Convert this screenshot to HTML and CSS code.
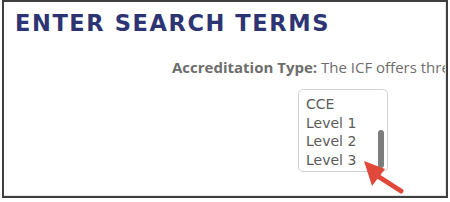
FILE: index.html
```html
<!DOCTYPE html>
<html>
<head>
<meta charset="utf-8">
<link rel="stylesheet" href="styles.css">
</head>
<body>
<div class="frame">
  <div class="inner">
    <h1 class="title">ENTER SEARCH TERMS</h1>
    <div class="field">
      <p class="label"><b>Accreditation Type:</b> The ICF offers three levels of credentials</p>
      <div class="listbox">
        <div class="options">
          <div class="opt">CCE</div>
          <div class="opt">Level 1</div>
          <div class="opt">Level 2</div>
          <div class="opt">Level 3</div>
        </div>
        <div class="track"><div class="thumb"></div></div>
      </div>
    </div>
    <svg class="arrow" width="46" height="38" viewBox="0 0 46 38">
      <polygon points="4,4 25,12 12,29" fill="#e0483a"/>
      <line x1="16" y1="18" x2="41" y2="34" stroke="#e0483a" stroke-width="5" stroke-linecap="round"/>
    </svg>
  </div>
</div>
</body>
</html>
```
FILE: styles.css
```css
html, body {
  margin: 0;
  padding: 0;
  background: #fff;
}
.frame {
  margin-left: 2px;
  width: 446px;
  height: 198px;
  box-sizing: border-box;
  border: 2px solid #3f3f3f;
  overflow: hidden;
  position: relative;
}
.inner {
  height: 100%;
  box-sizing: border-box;
  border-right: 1px solid #e6e6e6;
  border-bottom: 1px solid #e6e6e6;
  overflow: hidden;
  position: relative;
}
.title {
  margin: 0;
  padding: 8px 0 0 11px;
  font-family: "DejaVu Sans", sans-serif;
  font-weight: 700;
  font-size: 22.5px;
  line-height: 26px;
  letter-spacing: 1.6px;
  color: #2d3474;
  white-space: nowrap;
}
.field {
  display: flex;
  flex-direction: column;
  padding-top: 22px;
}
.label {
  margin: 0;
  padding-left: 168px;
  font-family: "Open Sans", sans-serif;
  font-size: 15px;
  line-height: 18px;
  color: #6d6d6d;
  white-space: nowrap;
}
.label b {
  font-weight: 700;
}
.listbox {
  margin: 13px 0 0 294px;
  width: 90px;
  height: 83px;
  box-sizing: border-box;
  border: 1px solid #d2d2d2;
  border-radius: 5px;
  display: flex;
  overflow: hidden;
}
.options {
  flex: 1;
  padding: 5px 0 0 7px;
  font-family: "DejaVu Sans", sans-serif;
  font-size: 14px;
  line-height: 18.7px;
  color: #5b5b5b;
}
.track {
  width: 6px;
  margin-right: 3px;
}
.thumb {
  margin-top: 40px;
  height: 38px;
  background: #7d7d7d;
  border-radius: 3px;
}
.arrow {
  position: absolute;
  left: 356px;
  top: 155px;
}
```
